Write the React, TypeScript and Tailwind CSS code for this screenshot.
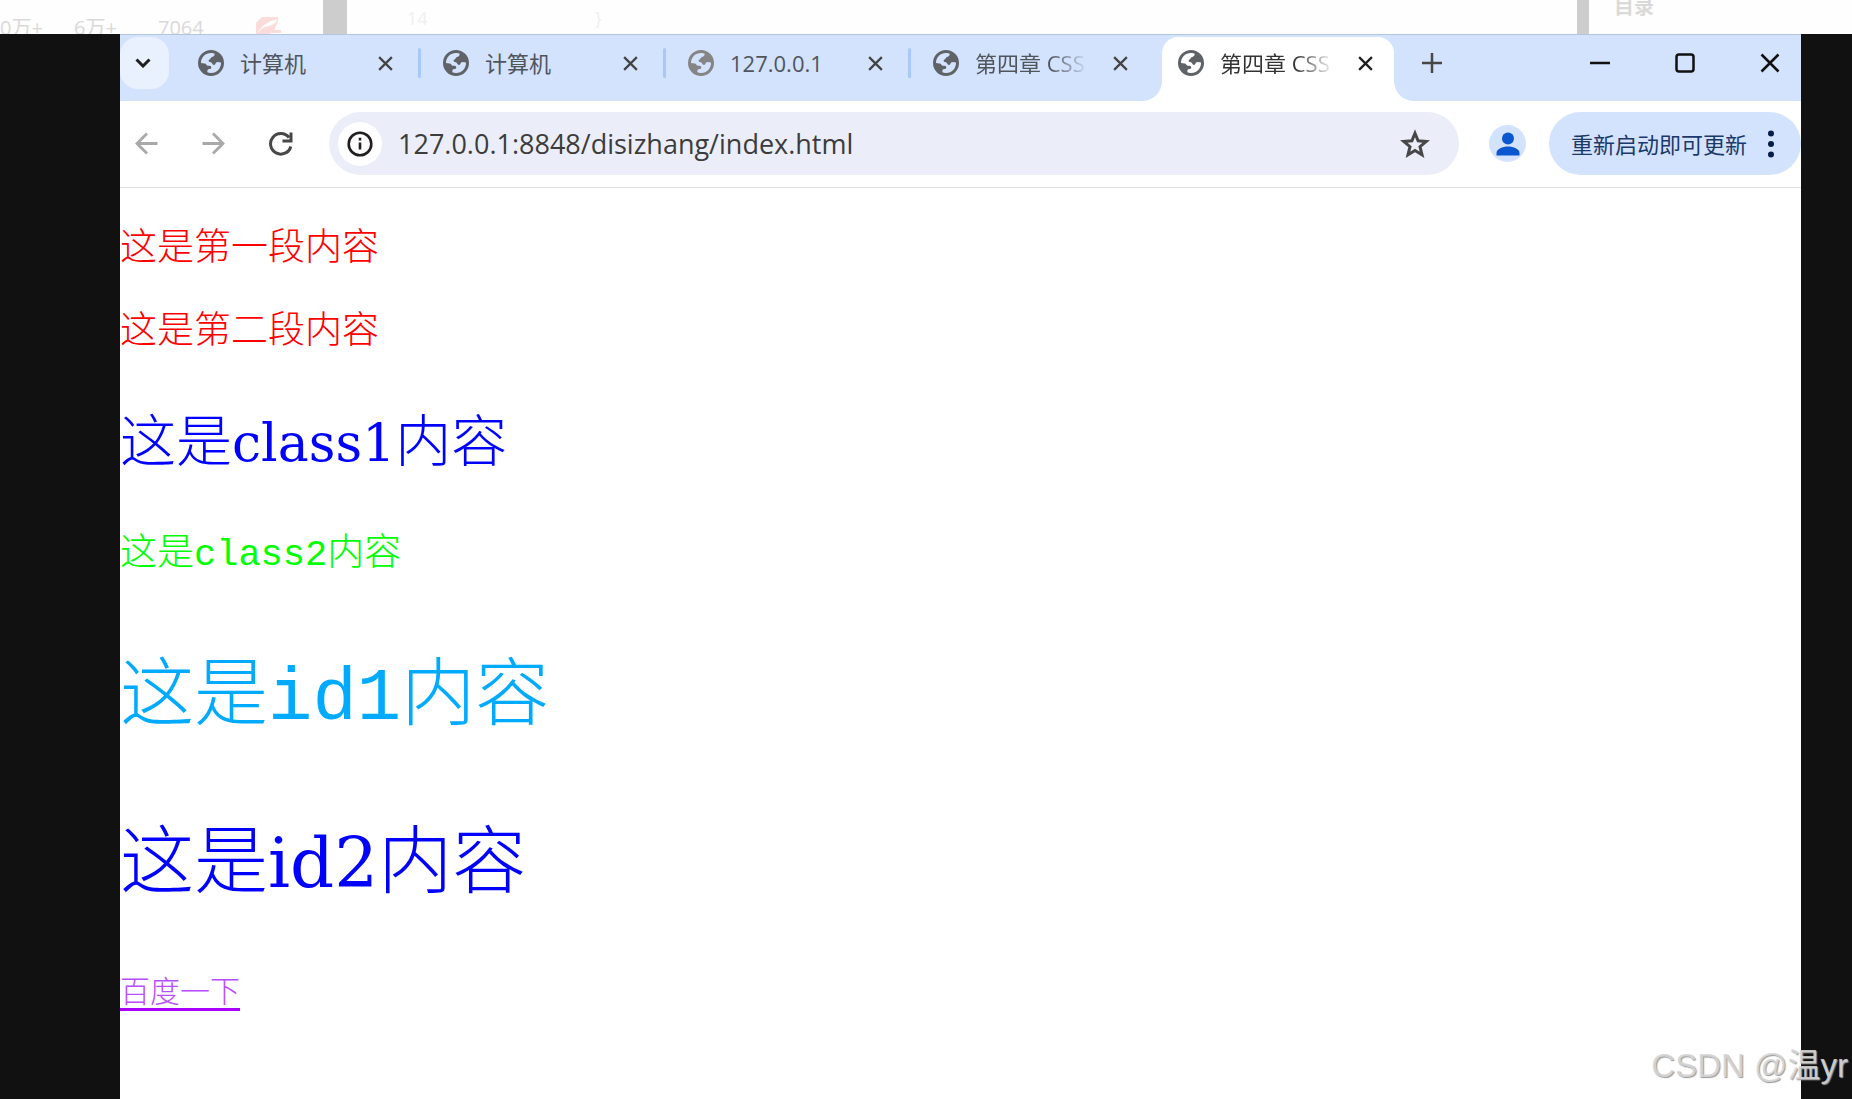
import React from "react";

const SANS = "font-['Open_Sans','Noto_Sans_CJK_SC',sans-serif]";

const tabs = ["计算机", "计算机", "127.0.0.1", "第四章 CSS", "第四章 CSS"];

function Globe({ muted }: { muted?: boolean }) {
  return (
    <svg viewBox="0 0 26 26" className={`size-[26px] shrink-0 ${muted ? "text-[#858585]" : "text-[#5f6368]"}`} aria-hidden="true">
      <path
        fill="currentColor"
        fillRule="evenodd"
        d="M13 0a13 13 0 1 0 0 26a13 13 0 0 0 0-26z M3 13C3 7 7.500 3 13 3C14.500 3 16 3.300 16.500 3.600C17 5.500 16 6.800 14 7C12.500 7.200 12.800 9.200 11.500 9.500C10.200 9.800 10.300 12 12 12C14.500 12 14 15 16 15C18 15 17 12 19.500 12L23 12.500C23.200 18.500 18.500 23.200 13 23C11.500 23 10.300 22.700 9.500 22.300C9 20.500 9.500 19 11.500 19C13.500 19 13.500 17.500 13 16.500C12.500 15.500 11.500 15.800 10 15.800C8.500 15.800 8.500 13.500 6.500 13.500z"
      />
    </svg>
  );
}

function Cross({ className, width }: { className: string; width: number }) {
  return (
    <svg viewBox="0 0 20 20" className={className} fill="none" stroke="currentColor" strokeWidth={width} aria-hidden="true">
      <path d="M1.500 1.500l17 17M18.500 1.500l-17 17" />
    </svg>
  );
}

function Tab({ title, index }: { title: string; index: number }) {
  const active = index === tabs.length - 1;
  return (
    <div
      className={`relative flex h-16 items-center pb-3 pl-4 ${
        active ? "w-[232px] rounded-t-2xl bg-white" : "w-[245px]"
      }`}
    >
      {active && (
        <>
          <svg className="absolute -left-5 bottom-0 size-5" viewBox="0 0 20 20" aria-hidden="true">
            <path d="M20 0v20H0A20 20 0 0 0 20 0z" fill="#fff" />
          </svg>
          <svg className="absolute -right-5 bottom-0 size-5" viewBox="0 0 20 20" aria-hidden="true">
            <path d="M0 0v20h20A20 20 0 0 1 0 0z" fill="#fff" />
          </svg>
        </>
      )}
      <button className={`flex min-w-0 items-center gap-4 text-left text-[22px] leading-8 ${active ? "text-[#333]" : "text-[#50555c]"}`}>
        <Globe muted={index === 2} />
        <span
          className={`w-[114px] whitespace-nowrap ${
            index > 2 ? "[mask-image:linear-gradient(to_right,#000_65%,transparent)]" : ""
          }`}
        >
          {title}
        </span>
      </button>
      <button aria-label="关闭标签页" className={`ml-6 ${active ? "text-[#1f1f1f]" : "text-[#444]"}`}>
        <Cross className="size-[15px]" width={3} />
      </button>
      {index < 3 && <span className="ml-auto mr-[6px] h-[30px] w-[3px] rounded bg-[#a8c7fa]" />}
    </div>
  );
}

function BackdropStrip() {
  return (
    <header className={`flex h-[34px] items-start overflow-hidden bg-[#fefefe] text-xl text-[#d9d9d9] ${SANS}`}>
      <div className="flex w-[323px] shrink-0 items-start pt-[14px] leading-7">
        <span className="w-[74px]">0万+</span>
        <span className="w-[84px]">6万+</span>
        <span className="w-[98px]">7064</span>
        <svg viewBox="0 0 26 26" className="mt-[3px] size-[26px]" aria-hidden="true">
          <path d="M6 0h16v5l-4 8h7v13H0V6z" fill="#fbdcdb" />
          <path d="M1 18C4 10 10 5 21 2C20 7 15 9 9 10C6 11 3 14 1 18zM14 16h11v2H14z" fill="#fff" />
        </svg>
      </div>
      <span className="h-full w-6 shrink-0 bg-[#cdcdcd]" />
      <div className="flex h-full flex-1 items-start pt-1 text-lg leading-7 text-[#f0f0f0]">
        <span className="ml-[60px] w-[188px]">14</span>
        <span>{"}"}</span>
      </div>
      <span className="h-full w-3 shrink-0 bg-[#cdcdcd]" />
      <strong className="-mt-[7px] w-[263px] shrink-0 pl-[25px] leading-7">目录</strong>
    </header>
  );
}

function TabBar() {
  return (
    <div className="flex h-[67px] items-end border-t border-[#b4c6de] bg-[#d3e2fd]">
      <button aria-label="搜索标签页" className="mb-3 flex h-[52px] w-[49px] items-center justify-center rounded-[18px] bg-[#eaf1fe] pr-1">
        <svg viewBox="0 0 16 10" className="h-[10px] w-4" fill="none" stroke="#1f1f1f" strokeWidth="3" aria-hidden="true">
          <path d="M1.500 1.500L8 8l6.500-6.500" />
        </svg>
      </button>
      <div className="ml-[13px] flex">
        {tabs.map((title, i) => (
          <Tab key={i} title={title} index={i} />
        ))}
      </div>
      <button aria-label="新标签页" className="mb-7 ml-7">
        <svg viewBox="0 0 20 20" className="size-5" stroke="#474747" strokeWidth="2.500" aria-hidden="true">
          <path d="M10 0v20M0 10h20" />
        </svg>
      </button>
      <div className="mb-7 ml-auto mr-[21px] flex items-center gap-[65px]">
        <button aria-label="最小化">
          <svg viewBox="0 0 20 20" className="size-5" stroke="#111" strokeWidth="2.500" aria-hidden="true">
            <path d="M0 10h20" />
          </svg>
        </button>
        <button aria-label="最大化">
          <svg viewBox="0 0 20 20" className="size-5" stroke="#111" strokeWidth="2.500" fill="none" aria-hidden="true">
            <rect x="1.500" y="1.500" width="17" height="17" rx="2.500" />
          </svg>
        </button>
        <button aria-label="关闭" className="text-[#111]">
          <Cross className="size-5" width={2.5} />
        </button>
      </div>
    </div>
  );
}

function Toolbar() {
  return (
    <div className="flex h-[87px] items-center border-b border-[#e3e3e3] bg-white pb-px pl-[15px]">
      <div className="flex items-center gap-[44px]">
        <button aria-label="后退">
          <svg viewBox="0 0 23 23" className="size-[23px]" fill="none" stroke="#a9a9a9" strokeWidth="2.800" aria-hidden="true">
            <path d="M22.500 11.500H2M12 1.500l-10 10 10 10" />
          </svg>
        </button>
        <button aria-label="前进">
          <svg viewBox="0 0 23 23" className="size-[23px]" fill="none" stroke="#a9a9a9" strokeWidth="2.800" aria-hidden="true">
            <path d="M.5 11.500H21M11 1.500l10 10-10 10" />
          </svg>
        </button>
        <button aria-label="重新加载">
          <svg viewBox="0 0 24 24" className="size-6" fill="none" stroke="#474747" strokeWidth="3" aria-hidden="true">
            <path d="M21.800 14.500A10.300 10.300 0 1 1 20 5.500M22 .5V9h-8.500" />
          </svg>
        </button>
      </div>
      <label className="ml-[36px] flex h-[63px] flex-1 items-center rounded-full bg-[#ebeef8] pl-[9px] pr-[29px]">
        <span className="flex size-11 shrink-0 items-center justify-center rounded-full bg-white">
          <svg viewBox="0 0 26 26" className="size-[26px]" fill="none" stroke="#1f1f1f" strokeWidth="2.600" aria-hidden="true">
            <circle cx="13" cy="13" r="11.300" />
            <path d="M13 11.500v7M13 6.800v2.600" />
          </svg>
        </span>
        <input
          aria-label="地址栏"
          defaultValue="127.0.0.1:8848/disizhang/index.html"
          className="ml-4 min-w-0 flex-1 bg-transparent text-[27px] leading-9 text-[#3c3c3c] outline-none"
        />
        <svg viewBox="0 0 30 30" className="size-[30px]" fill="none" stroke="#474747" strokeWidth="3" aria-hidden="true">
          <path d="M15 4.200l3.100 7.600 8.200.6-6.300 5.300 2 8L15 21.400l-7 4.300 2-8-6.300-5.300 8.200-.6z" />
        </svg>
      </label>
      <button aria-label="个人资料" className="ml-[30px] flex size-[37px] items-center justify-center rounded-full bg-[#d3e3fd]">
        <svg viewBox="0 0 24 24" className="size-6" fill="#0b57d0" aria-hidden="true">
          <circle cx="12" cy="6.500" r="6" />
          <path d="M.5 23.500v-2.500c0-4 6-6.500 11.500-6.500s11.500 2.500 11.500 6.500v2.500z" />
        </svg>
      </button>
      <button className="ml-[23px] flex h-[63px] w-[252px] items-center rounded-full bg-[#d3e3fd] pl-[22px] text-[22px] leading-8 text-[#1b3a6b]">
        重新启动即可更新
        <svg viewBox="0 0 6 28" className="ml-[21px] h-7 w-[6px]" fill="#041e49" aria-hidden="true">
          <circle cx="3" cy="3.500" r="3" />
          <circle cx="3" cy="14" r="3" />
          <circle cx="3" cy="24.500" r="3" />
        </svg>
      </button>
    </div>
  );
}

function PageContent() {
  return (
    <main className="flex-1 bg-white pt-[41px] font-light font-['Liberation_Mono','Noto_Sans_CJK_SC',monospace]">
      <p className="text-[37px] leading-[42px] text-[#ff0000]">这是第一段内容</p>
      <p className="mt-[41px] text-[37px] leading-[42px] text-[#ff0000]">这是第二段内容</p>
      <p className="mt-[51px] font-['Noto_Sans_CJK_SC',sans-serif] text-[56px] leading-[64px] text-[#0000ff]">
        这是<span className="font-['DejaVu_Serif',serif] text-[52px]">class1</span>内容
      </p>
      <p className="mt-[59px] text-[37px] leading-[42px] text-[#00ff00]">这是class2内容</p>
      <p className="mt-[80px] text-[74px] leading-[86px] text-[#00aaff]">这是id1内容</p>
      <p className="mt-[70px] font-['Noto_Sans_CJK_SC',sans-serif] text-[74px] leading-[86px] text-[#0000ff]">
        这是<span className="font-['DejaVu_Serif',serif] text-[69px]">id2</span>内容
      </p>
      <a
        href="#baidu"
        className="mt-[74px] inline-block border-b-[3px] border-[#aa00ff] text-[30px] leading-[28px] text-[#b84dff]"
      >
        百度一下
      </a>
    </main>
  );
}

export default function App() {
  return (
    <div className="relative flex min-h-screen flex-col overflow-hidden bg-[#111]">
      <BackdropStrip />
      <div className="ml-[120px] mr-[51px] flex flex-1 flex-col">
        <div className={SANS}>
          <TabBar />
          <Toolbar />
        </div>
        <PageContent />
      </div>
      <div className="absolute bottom-[13px] right-1 font-['Liberation_Sans','Noto_Sans_CJK_SC',sans-serif] text-[33px] leading-10 text-[#d8d8d8]/90 [text-shadow:1px_1px_1px_#999]">
        CSDN @温yr
      </div>
    </div>
  );
}
